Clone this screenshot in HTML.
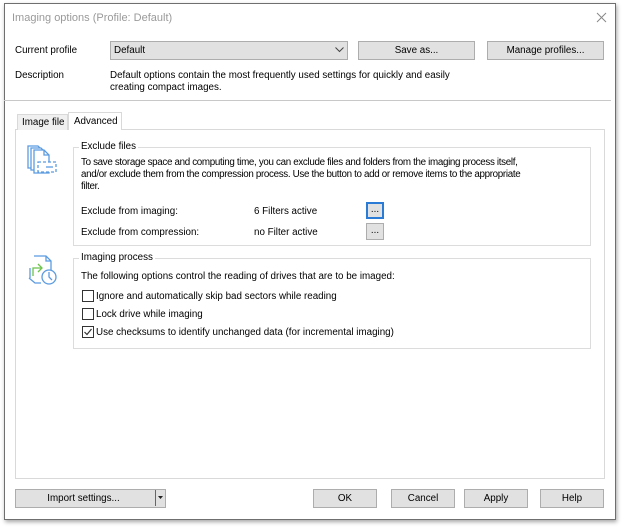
<!DOCTYPE html>
<html><head><style>
*{box-sizing:border-box;margin:0;padding:0}
body{width:624px;height:528px;background:#fff;font-family:"Liberation Sans",sans-serif;font-size:9.8px;color:#000;position:relative;overflow:hidden}
.a{position:absolute;white-space:nowrap}
.win{position:absolute;left:4px;top:3px;width:612px;height:517px;border:1px solid #6f6f6f;box-shadow:1px 2px 4px rgba(0,0,0,.35);background:#fff}
.btn{position:absolute;background:#e1e1e1;border:1px solid #adadad;text-align:center;line-height:17px;height:19px}
.grp{position:absolute;border:1px solid #dcdcdc}
.gt{position:absolute;background:#fff;padding:0 2px;top:-7px;left:5px}
.cb{position:absolute;width:12px;height:12px;border:1px solid #333;background:#fff}
</style></head><body>
<div class="win"></div>
<div class="a" style="left:12px;top:12px;color:#9a9a9a;font-size:11px">Imaging options (Profile: Default)</div>
<svg class="a" style="left:596px;top:12px" width="11" height="11"><path d="M1 1L10 10M10 1L1 10" stroke="#888" stroke-width="1"/></svg>
<div class="a" style="left:15px;top:45px">Current profile</div>
<div class="btn" style="left:110px;top:41px;width:238px;text-align:left;padding-left:3px">Default</div>
<svg class="a" style="left:335px;top:47px" width="9" height="6"><path d="M0.5 0.5L4.5 4.5L8.5 0.5" stroke="#444" fill="none"/></svg>
<div class="btn" style="left:358px;top:41px;width:117px">Save as...</div>
<div class="btn" style="left:487px;top:41px;width:117px">Manage profiles...</div>
<div class="a" style="left:15px;top:70px">Description</div>
<div class="a" style="left:110px;top:70px;line-height:12px">Default options contain the most frequently used settings for quickly and easily<br>creating compact images.</div>
<div class="a" style="left:4px;top:100px;width:607px;height:1px;background:#c8c8c8"></div>
<div class="a" style="left:15px;top:129px;width:590px;height:350px;border:1px solid #d9d9d9"></div>
<div class="a" style="left:17px;top:114px;width:51px;height:16px;border:1px solid #d9d9d9;border-bottom:none;background:#f0f0f0;padding:2px 0 0 4px">Image file</div>
<div class="a" style="left:68px;top:112px;width:54px;height:18px;border:1px solid #d9d9d9;border-bottom:none;background:#fff;padding:3px 0 0 5px">Advanced</div>
<svg class="a" style="left:26px;top:144px" width="32" height="32" fill="none" stroke="#5b9be0" stroke-width="1.3">
<path d="M2 2h10l4 4v18H2z"/><path d="M5 4h10l4 4v18H5z" fill="#fff"/><path d="M8 6h10l5 5v18H8z" fill="#fff"/><path d="M18 6v5h5"/>
<path d="M12 18h18v10H12z" stroke-dasharray="3 2" fill="#fff"/><path d="M20 23h7"/></svg>
<div class="grp" style="left:73px;top:147px;width:518px;height:99px"><div class="gt">Exclude files</div></div>
<div class="a" style="left:81px;top:157px;line-height:12px;letter-spacing:-0.33px">To save storage space and computing time, you can exclude files and folders from the imaging process itself,<br>and/or exclude them from the compression process. Use the button to add or remove items to the appropriate<br>filter.</div>
<div class="a" style="left:81px;top:206px">Exclude from imaging:</div>
<div class="a" style="left:254px;top:206px">6 Filters active</div>
<div class="btn" style="left:366px;top:202px;width:18px;height:17px;border:2px solid #2a7bd6;line-height:11px">...</div>
<div class="a" style="left:81px;top:227px">Exclude from compression:</div>
<div class="a" style="left:254px;top:227px">no Filter active</div>
<div class="btn" style="left:366px;top:223px;width:18px;height:17px;line-height:13px">...</div>
<svg class="a" style="left:26px;top:252px" width="34" height="34" fill="none" stroke="#5b9be0" stroke-width="1.3">
<path d="M8 4h12l5 5v10"/><path d="M20 4v5h5"/><path d="M4 26V16"/>
<path d="M3 26l6 5h6"/><circle cx="23" cy="25" r="7" fill="#fff"/><path d="M23 20v5l3 3"/>
<path d="M7 24v-8h8" stroke="#6cc24a"/><path d="M12 12l4 4-4 4" stroke="#6cc24a"/></svg>
<div class="grp" style="left:73px;top:258px;width:518px;height:91px"><div class="gt">Imaging process</div></div>
<div class="a" style="left:81px;top:271px">The following options control the reading of drives that are to be imaged:</div>
<div class="cb" style="left:82px;top:290px"></div><div class="a" style="left:96px;top:291px">Ignore and automatically skip bad sectors while reading</div>
<div class="cb" style="left:82px;top:308px"></div><div class="a" style="left:96px;top:309px">Lock drive while imaging</div>
<div class="cb" style="left:82px;top:326px"></div>
<svg class="a" style="left:83px;top:327px" width="10" height="10"><path d="M1.5 5L4 7.5L8.5 2" stroke="#333" stroke-width="1.2" fill="none"/></svg>
<div class="a" style="left:96px;top:327px">Use checksums to identify unchanged data (for incremental imaging)</div>
<div class="btn" style="left:15px;top:489px;width:151px;padding-right:14px">Import settings...</div>
<div class="a" style="left:155px;top:490px;width:1px;height:16px;background:#666"></div>
<svg class="a" style="left:158px;top:496px" width="5" height="4"><path d="M0 0h5L2.5 3z" fill="#222"/></svg>
<div class="btn" style="left:313px;top:489px;width:64px">OK</div>
<div class="btn" style="left:391px;top:489px;width:64px">Cancel</div>
<div class="btn" style="left:464px;top:489px;width:64px">Apply</div>
<div class="btn" style="left:540px;top:489px;width:64px">Help</div>
</body></html>
